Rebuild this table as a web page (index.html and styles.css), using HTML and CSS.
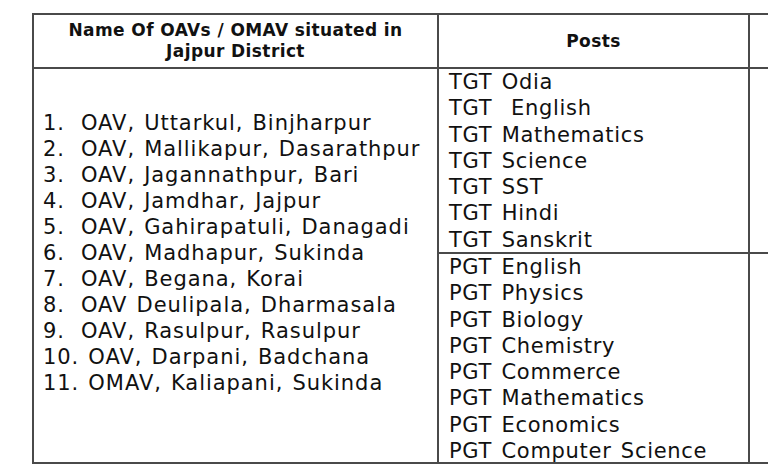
FILE: index.html
```html
<!DOCTYPE html>
<html>
<head>
<meta charset="utf-8">
<link rel="stylesheet" href="styles.css">
</head>
<body>
<div class="sheet">
  <div class="grid">
    <div class="cell head">Name Of OAVs / OMAV situated in<br>Jajpur District</div>
    <div class="cell head">Posts</div>
    <div class="cell head last"></div>

    <div class="cell schools">
      <ol class="list">
        <li><span class="num">1.</span>OAV, Uttarkul, Binjharpur</li>
        <li><span class="num">2.</span>OAV, Mallikapur, Dasarathpur</li>
        <li><span class="num">3.</span>OAV, Jagannathpur, Bari</li>
        <li><span class="num">4.</span>OAV, Jamdhar, Jajpur</li>
        <li><span class="num">5.</span>OAV, Gahirapatuli, Danagadi</li>
        <li><span class="num">6.</span>OAV, Madhapur, Sukinda</li>
        <li><span class="num">7.</span>OAV, Begana, Korai</li>
        <li><span class="num">8.</span>OAV Deulipala, Dharmasala</li>
        <li><span class="num">9.</span>OAV, Rasulpur, Rasulpur</li>
        <li>10. OAV, Darpani, Badchana</li>
        <li>11. OMAV, Kaliapani, Sukinda</li>
      </ol>
    </div>
    <div class="cell posts">
      <div>TGT Odia</div>
      <div>TGT&nbsp; English</div>
      <div>TGT Mathematics</div>
      <div>TGT Science</div>
      <div>TGT SST</div>
      <div>TGT Hindi</div>
      <div>TGT Sanskrit</div>
    </div>
    <div class="cell last"></div>
    <div class="cell posts">
      <div>PGT English</div>
      <div>PGT Physics</div>
      <div>PGT Biology</div>
      <div>PGT Chemistry</div>
      <div>PGT Commerce</div>
      <div>PGT Mathematics</div>
      <div>PGT Economics</div>
      <div>PGT Computer Science</div>
    </div>
    <div class="cell last"></div>
  </div>
</div>
</body>
</html>
```

FILE: styles.css
```css
html, body {
  margin: 0;
  padding: 0;
  background: #ffffff;
  overflow: hidden;
}
body {
  width: 768px;
  height: 469px;
  font-family: "DejaVu Sans", Verdana, sans-serif;
  color: #111111;
}
.sheet {
  padding: 13px 0 0 32px;
}
.grid {
  display: grid;
  grid-template-columns: 405px 311px 100px;
  grid-template-rows: 54px 185px 210px;
  border-top: 2px solid #4a4a4a;
  border-left: 2px solid #4a4a4a;
  width: 818px;
  box-sizing: border-box;
}
.cell {
  box-sizing: border-box;
  border-right: 2px solid #4a4a4a;
  border-bottom: 2px solid #4a4a4a;
}
.cell.last {
  border-right: none;
}
.head {
  display: flex;
  align-items: center;
  justify-content: center;
  text-align: center;
  font-weight: bold;
  font-size: 17px;
  line-height: 21px;
  letter-spacing: 0.4px;
}
.schools {
  grid-row: 2 / 4;
  padding: 41px 0 0 9px;
}
.list {
  list-style: none;
  margin: 0;
  padding: 0;
  font-size: 21px;
  line-height: 26px;
  letter-spacing: 0.95px;
  word-spacing: 1.5px;
}
.num {
  display: inline-block;
  width: 38px;
}
.posts {
  padding: 0 0 0 10px;
  font-size: 21px;
  line-height: 26.3px;
  letter-spacing: 0.7px;
  word-spacing: 2px;
}
```
